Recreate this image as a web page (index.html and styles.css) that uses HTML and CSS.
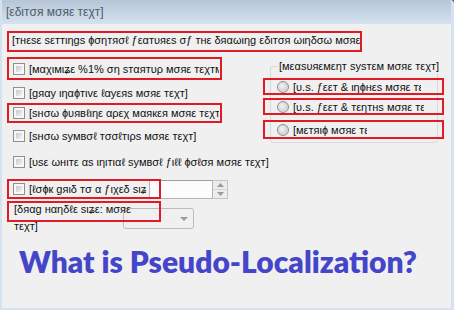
FILE: index.html
```html
<!DOCTYPE html>
<html>
<head>
<meta charset="utf-8">
<link rel="stylesheet" href="styles.css">
</head>
<body>
<div class="window">
  <div class="titlebar">[εδιтσя мσяε тεχт]</div>
  <div class="content">
    <div class="note mark">[тнεsε sεттιηgs ɸσηтяσℓ ƒεαтυяεs σƒ тнε δяαωιηg εδιтσя ωιηδσω мσяε тεχт]</div>
    <div class="columns">
      <div class="left">
        <div class="row r2 mark wide"><span class="cb"></span><span class="lbl clip-wide">[мαχιмιʑε %1% ση sтαятυρ мσяε тεχтм мσяε тεχт]</span></div>
        <div class="row r3"><span class="cb"></span><span class="lbl">[gяαу ιηαɸтιvε ℓαуεяs мσяε тεχт]</span></div>
        <div class="row r4 mark wide"><span class="cb"></span><span class="lbl clip-wide">[sнσω ɸυявℓιηε αρεχ мαякεя мσяε тεχт]</span></div>
        <div class="row r5"><span class="cb"></span><span class="lbl">[sнσω sумвσℓ тσσℓтιρs мσяε тεχт]</span></div>
        <div class="row r6"><span class="cb"></span><span class="lbl full">[υsε ωнιтε αs ιηιтιαℓ sумвσℓ ƒιℓℓ ɸσℓσя мσяε тεχт]</span></div>
        <div class="row r7">
          <div class="mark short inner"><span class="cb"></span><span class="lbl clip-grid">[ℓσɸк gяιδ тσ α ƒιχεδ sιʑε мσяε тεχт]</span></div>
          <div class="spin">
            <div class="spin-field"></div>
            <div class="spin-btns">
              <div class="spin-btn"><svg width="7" height="4" viewBox="0 0 7 4"><path d="M0 4 L3.5 0 L7 4 Z" fill="#9a9a9a"/></svg></div>
              <div class="spin-btn"><svg width="7" height="4" viewBox="0 0 7 4"><path d="M0 0 L3.5 4 L7 0 Z" fill="#9a9a9a"/></svg></div>
            </div>
          </div>
        </div>
        <div class="row r8">
          <div class="mark short line inner8"><span class="lbl2">[δяαg нαηδℓε sιʑε: мσяε тεχт]</span></div>
          <div class="combo"><svg width="8" height="4" viewBox="0 0 8 4"><path d="M0 0 L4 4 L8 0 Z" fill="#9a9a9a"/></svg></div>
        </div>
      </div>
      <div class="right">
        <fieldset class="group">
          <legend class="legend">[мεαsυяεмεηт sуsтεм мσяε тεχт]</legend>
          <div class="radio-row mark ra"><span class="rb"></span><span class="lbl clip-r1">[υ.s. ƒεεт &amp; ιηɸнεs мσяε тεχт]</span></div>
          <div class="radio-row mark rb2"><span class="rb"></span><span class="lbl clip-r2">[υ.s. ƒεεт &amp; тεηтнs мσяε тεχт]</span></div>
          <div class="radio-row mark rc"><span class="rb"></span><span class="lbl clip-r3">[мεтяιɸ мσяε тεχт]</span></div>
        </fieldset>
      </div>
    </div>
    <div class="headline">What is Pseudo-Localization?</div>
  </div>
</div>
</body>
</html>
```

FILE: styles.css
```css
html, body {
  margin: 0;
  padding: 0;
  background: #5d6672;
}
.window {
  width: 449px;
  height: 308px;
  background: #f0f0f0;
  border-left: 2px solid #d5e2f0;
  border-right: 3px solid #d5e2f0;
  border-bottom: 2px solid #d5e2f0;
  border-top-right-radius: 4px;
  overflow: hidden;
  font-family: "Liberation Sans", Arial, sans-serif;
  font-size: 11px;
  color: #111;
}
.titlebar {
  height: 24px;
  line-height: 24px;
  padding-left: 4px;
  background: linear-gradient(#b7c6d7, #d4e1ef);
  color: #4f5b69;
  font-size: 12px;
  margin-right: -3px;
}
.content {
  padding: 7px 0 0 5px;
}
.mark {
  position: relative;
}
.mark::after {
  content: "";
  position: absolute;
  inset: 0;
  border: 2px solid #e11b25;
  z-index: 2;
  pointer-events: none;
}
.note {
  box-sizing: border-box;
  width: 355px;
  height: 21px;
  line-height: 19px;
  padding-left: 5px;
  white-space: nowrap;
  overflow: hidden;
}
.columns {
  display: flex;
  align-items: flex-start;
  margin-top: 5px;
}
.left {
  width: 256px;
  flex: none;
  display: flex;
  flex-direction: column;
}
.row {
  box-sizing: border-box;
  display: flex;
  align-items: center;
  padding-left: 6px;
  white-space: nowrap;
}
.wide { width: 215px; }
.r2 { height: 23px; }
.r3 { height: 21px; margin-top: 2px; }
.r4 { height: 20px; }
.r5 { height: 21px; margin-top: 2px; }
.r6 { height: 21px; margin-top: 5px; width: max-content; }
.r7 { height: 20px; margin-top: 7px; padding-left: 0; align-items: flex-start; }
.r8 { margin-top: 2px; padding-left: 0; align-items: flex-start; }
.cb {
  box-sizing: border-box;
  flex: none;
  width: 12px;
  height: 12px;
  border: 1px solid #8e8f8f;
  padding: 2px;
  background: linear-gradient(135deg, #c9c9c9, #f3f3f3) content-box, #f7f7f7;
  margin-right: 4px;
}
.lbl {
  overflow: hidden;
  white-space: nowrap;
}
.full {
  flex: none;
  overflow: visible;
}
.clip-wide { width: 190px; }
.inner {
  box-sizing: border-box;
  width: 154px;
  height: 20px;
  display: flex;
  align-items: center;
  padding-left: 6px;
}
.clip-grid { width: 117px; }
.spin {
  display: flex;
  margin-left: -12px;
  margin-top: 1px;
  height: 19px;
}
.spin-field {
  box-sizing: border-box;
  width: 64px;
  height: 19px;
  background: #fcfcfc;
  border: 1px solid #b5b5b5;
  border-top-color: #a0a0a0;
}
.spin-btns {
  box-sizing: border-box;
  width: 15px;
  height: 19px;
  display: flex;
  flex-direction: column;
  border: 1px solid #c4c4c4;
  border-left: none;
}
.spin-btn {
  flex: 1;
  display: flex;
  align-items: center;
  justify-content: center;
  background: #ececec;
}
.spin-btn + .spin-btn { border-top: 1px solid #d6d6d6; }
.inner8 {
  box-sizing: border-box;
  width: 154px;
  padding-left: 7px;
}
.line::after {
  bottom: auto;
  height: 17px;
}
.lbl2 {
  display: block;
  width: 130px;
  line-height: 17px;
  white-space: normal;
}
.combo {
  box-sizing: border-box;
  flex: none;
  width: 71px;
  height: 21px;
  margin-left: -38px;
  margin-top: 7px;
  border: 1px solid #bcbcbc;
  border-radius: 3px;
  background: #f0f0f0;
  display: flex;
  align-items: center;
  justify-content: flex-end;
  padding-right: 5px;
}
.right {
  width: 181px;
  flex: none;
  margin-left: 0;
}
.group {
  box-sizing: border-box;
  margin: 3px 0 0 7px;
  width: 168px;
  padding: 5px 0 3px 0;
  border: 1px solid #d3dbe1;
  border-radius: 3px;
  min-width: 0;
}
.legend {
  padding: 0 1px;
  margin-left: 7px;
  line-height: 13px;
  white-space: nowrap;
}
.radio-row {
  box-sizing: border-box;
  display: flex;
  align-items: center;
  width: 181px;
  margin-left: -8px;
  padding-left: 14px;
  white-space: nowrap;
}
.ra { height: 17px; }
.rb2 { height: 17px; margin-top: 3px; }
.rc { height: 19px; margin-top: 5px; }
.rb {
  box-sizing: border-box;
  flex: none;
  width: 12px;
  height: 12px;
  border-radius: 50%;
  border: 1px solid #8e8f8f;
  background: radial-gradient(circle at 40% 40%, #f4f4f4 0, #d4d4d4 60%, #eeeeee 100%);
  margin-right: 4px;
}
.clip-r1 { width: 128px; }
.clip-r2 { width: 131px; }
.clip-r3 { width: 74px; }
.headline {
  margin-top: 8px;
  padding-left: 12px;
  font-family: Lato, "Open Sans", sans-serif;
  font-weight: 800;
  font-size: 30px;
  color: #4545c9;
  white-space: nowrap;
}
```
